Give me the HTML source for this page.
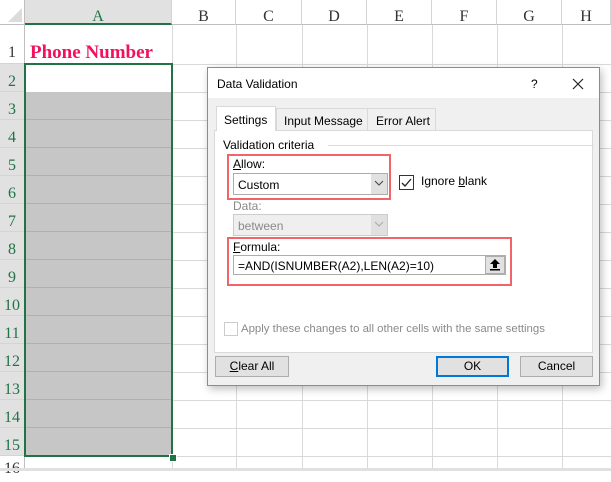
<!DOCTYPE html><html><head><style>
body{margin:0;width:611px;height:471px;overflow:hidden;background:#fff;font-family:"Liberation Serif",serif;position:relative}
.a{position:absolute}
.ch{top:0;height:25px;border-right:1px solid #d4d4d4;border-bottom:1px solid #bfbfbf;background:#fff;text-align:center;line-height:33px;font-size:16px;color:#333;box-sizing:border-box}
.rh{left:0;width:25px;border-bottom:1px solid #d4d4d4;border-right:1px solid #bfbfbf;box-sizing:border-box;text-align:center;font-size:16px;color:#333;background:#fff}
.vl{top:25px;height:446px;width:1px;background:#d9d9d9}
.hl{left:25px;width:586px;height:1px;background:#d9d9d9}
.d{font-family:"Liberation Sans",sans-serif;font-size:12px;color:#000}
.red{border:2px solid #f0646a;box-sizing:border-box}
.btn{border:1px solid #adadad;background:#e1e1e1;box-sizing:border-box;text-align:center;line-height:18px}
</style></head><body>
<div class="a" style="left:0;top:0;width:25px;height:25px;background:#fff;border-right:1px solid #bfbfbf;border-bottom:1px solid #bfbfbf;box-sizing:border-box"></div>
<svg class="a" style="left:8px;top:8px" width="14" height="14"><polygon points="14,0 14,14 0,14" fill="#dcdcdc"/></svg>
<div class="a ch" style="left:25px;width:147px;background:#e1e1e1;border-bottom:2px solid #217346;color:#217346">A</div>
<div class="a ch" style="left:172px;width:64px">B</div>
<div class="a ch" style="left:236px;width:66px">C</div>
<div class="a ch" style="left:302px;width:65px">D</div>
<div class="a ch" style="left:367px;width:65px">E</div>
<div class="a ch" style="left:432px;width:65px">F</div>
<div class="a ch" style="left:497px;width:65px">G</div>
<div class="a ch" style="left:562px;width:49px">H</div>
<div class="a vl" style="left:236px"></div><div class="a vl" style="left:302px"></div><div class="a vl" style="left:367px"></div><div class="a vl" style="left:432px"></div><div class="a vl" style="left:497px"></div><div class="a vl" style="left:562px"></div><div class="a vl" style="left:172px"></div>
<div class="a hl" style="top:64px"></div>
<div class="a hl" style="top:92px"></div><div class="a hl" style="top:120px"></div><div class="a hl" style="top:148px"></div><div class="a hl" style="top:176px"></div><div class="a hl" style="top:204px"></div><div class="a hl" style="top:232px"></div><div class="a hl" style="top:260px"></div><div class="a hl" style="top:288px"></div><div class="a hl" style="top:316px"></div><div class="a hl" style="top:344px"></div><div class="a hl" style="top:372px"></div><div class="a hl" style="top:400px"></div><div class="a hl" style="top:428px"></div><div class="a hl" style="top:456px"></div>
<div class="a rh" style="top:25px;height:39px;line-height:56px">1</div>
<div class="a rh" style="top:64px;height:28px;line-height:36px;background:#e1e1e1;color:#217346">2</div>
<div class="a rh" style="top:92px;height:28px;line-height:36px;background:#e1e1e1;color:#217346">3</div>
<div class="a rh" style="top:120px;height:28px;line-height:36px;background:#e1e1e1;color:#217346">4</div>
<div class="a rh" style="top:148px;height:28px;line-height:36px;background:#e1e1e1;color:#217346">5</div>
<div class="a rh" style="top:176px;height:28px;line-height:36px;background:#e1e1e1;color:#217346">6</div>
<div class="a rh" style="top:204px;height:28px;line-height:36px;background:#e1e1e1;color:#217346">7</div>
<div class="a rh" style="top:232px;height:28px;line-height:36px;background:#e1e1e1;color:#217346">8</div>
<div class="a rh" style="top:260px;height:28px;line-height:36px;background:#e1e1e1;color:#217346">9</div>
<div class="a rh" style="top:288px;height:28px;line-height:36px;background:#e1e1e1;color:#217346">10</div>
<div class="a rh" style="top:316px;height:28px;line-height:36px;background:#e1e1e1;color:#217346">11</div>
<div class="a rh" style="top:344px;height:28px;line-height:36px;background:#e1e1e1;color:#217346">12</div>
<div class="a rh" style="top:372px;height:28px;line-height:36px;background:#e1e1e1;color:#217346">13</div>
<div class="a rh" style="top:400px;height:28px;line-height:36px;background:#e1e1e1;color:#217346">14</div>
<div class="a rh" style="top:428px;height:28px;line-height:36px;background:#e1e1e1;color:#217346">15</div>
<div class="a rh" style="top:456px;height:15px;line-height:26px">16</div>
<div class="a" style="left:30px;top:42px;font-size:19px;font-weight:bold;color:#f0115f">Phone Number</div>
<div class="a" style="left:26px;top:92px;width:146px;height:364px;background:repeating-linear-gradient(#c6c6c6 0 27px,#b0b0b0 27px 28px)"></div>
<div class="a" style="left:24px;top:63px;width:149px;height:394px;border:2px solid #217346;box-sizing:border-box"></div>
<div class="a" style="left:169px;top:454px;width:6px;height:6px;background:#217346;border:1px solid #fff"></div>
<div class="a" style="left:0;top:468px;width:611px;height:3px;background:#e0e0e0"></div>

<div class="a d" style="left:207px;top:67px;width:393px;height:319px;background:#f0f0f0;border:1px solid #3dba6e;box-sizing:border-box;box-shadow:2px 3px 8px rgba(0,0,0,.25)">
<div class="a" style="left:0;top:0;width:391px;height:30px;background:#fff"></div>
<div class="a" style="left:9px;top:9px">Data Validation</div>
<div class="a" style="left:323px;top:9px">?</div>
<svg class="a" style="left:364px;top:10px" width="12" height="12"><path d="M1 1L11 11M11 1L1 11" stroke="#222" stroke-width="1.2"/></svg>
<div class="a" style="left:6px;top:62px;width:379px;height:223px;background:#fff;border:1px solid #d9d9d9;box-sizing:border-box"></div>
<div class="a" style="left:68px;top:40px;width:92px;height:22px;border:1px solid #d9d9d9;border-bottom:none;box-sizing:border-box;padding:5px 0 0 7px">Input Message</div>
<div class="a" style="left:160px;top:40px;width:68px;height:22px;border:1px solid #d9d9d9;border-bottom:none;border-left:none;box-sizing:border-box;padding:5px 0 0 8px">Error Alert</div>
<div class="a" style="left:8px;top:38px;width:60px;height:25px;background:#fff;border:1px solid #d9d9d9;border-bottom:none;box-sizing:border-box;padding:6px 0 0 7px">Settings</div>
<div class="a" style="left:15px;top:70px">Validation criteria</div>
<div class="a" style="left:120px;top:77px;width:266px;height:1px;background:#dcdcdc"></div>
<div class="a red" style="left:19px;top:86px;width:164px;height:46px"></div>
<div class="a" style="left:25px;top:89px"><u>A</u>llow:</div>
<div class="a" style="left:25px;top:105px;width:155px;height:22px;border:1px solid #adadad;box-sizing:border-box;background:#fff;padding:4px 0 0 4px">Custom</div>
<div class="a" style="left:163px;top:106px;width:16px;height:20px;background:#e1e1e1"></div>
<svg class="a" style="left:166px;top:112px" width="10" height="6"><path d="M1 1L5 5L9 1" stroke="#444" fill="none"/></svg>
<div class="a" style="left:191px;top:107px;width:13px;height:13px;border:1px solid #333;background:#fff"></div>
<svg class="a" style="left:192px;top:108px" width="13" height="13"><path d="M2 7L5 10L11 3" stroke="#222" fill="none" stroke-width="1.3"/></svg>
<div class="a" style="left:213px;top:106px">Ignore <u>b</u>lank</div>
<div class="a" style="left:25px;top:131px;color:#8a8a8a">Data:</div>
<div class="a" style="left:25px;top:146px;width:155px;height:22px;border:1px solid #cccccc;box-sizing:border-box;background:#efefef;padding:4px 0 0 4px;color:#8a8a8a">between</div>
<div class="a" style="left:163px;top:147px;width:16px;height:20px;background:#e0e0e0"></div>
<svg class="a" style="left:166px;top:153px" width="10" height="6"><path d="M1 1L5 5L9 1" stroke="#aaa" fill="none"/></svg>
<div class="a red" style="left:19px;top:169px;width:285px;height:49px"></div>
<div class="a" style="left:25px;top:172px"><u>F</u>ormula:</div>
<div class="a" style="left:25px;top:187px;width:273px;height:20px;border:1px solid #adadad;box-sizing:border-box;background:#fff;padding:3px 0 0 4px">=AND(ISNUMBER(A2),LEN(A2)=10)</div>
<div class="a" style="left:277px;top:188px;width:20px;height:18px;background:#e1e1e1;border:1px solid #adadad;box-sizing:border-box"></div>
<svg class="a" style="left:281px;top:190px" width="12" height="13"><path d="M6 1L1 6H4V10H8V6H11Z" fill="#000"/><rect x="1" y="11" width="10" height="1.5" fill="#000"/></svg>
<div class="a" style="left:16px;top:254px;width:12px;height:12px;border:1px solid #ccc;background:#fff"></div>
<div class="a" style="left:33px;top:255px;color:#8a8a8a;font-size:11.4px">Apply these changes to all other cells with the same settings</div>
<div class="a btn" style="left:7px;top:288px;width:74px;height:21px"><u>C</u>lear All</div>
<div class="a btn" style="left:228px;top:288px;width:73px;height:21px;border:2px solid #0078d7;line-height:17px">OK</div>
<div class="a btn" style="left:312px;top:288px;width:73px;height:21px">Cancel</div>
</div>
</body></html>
